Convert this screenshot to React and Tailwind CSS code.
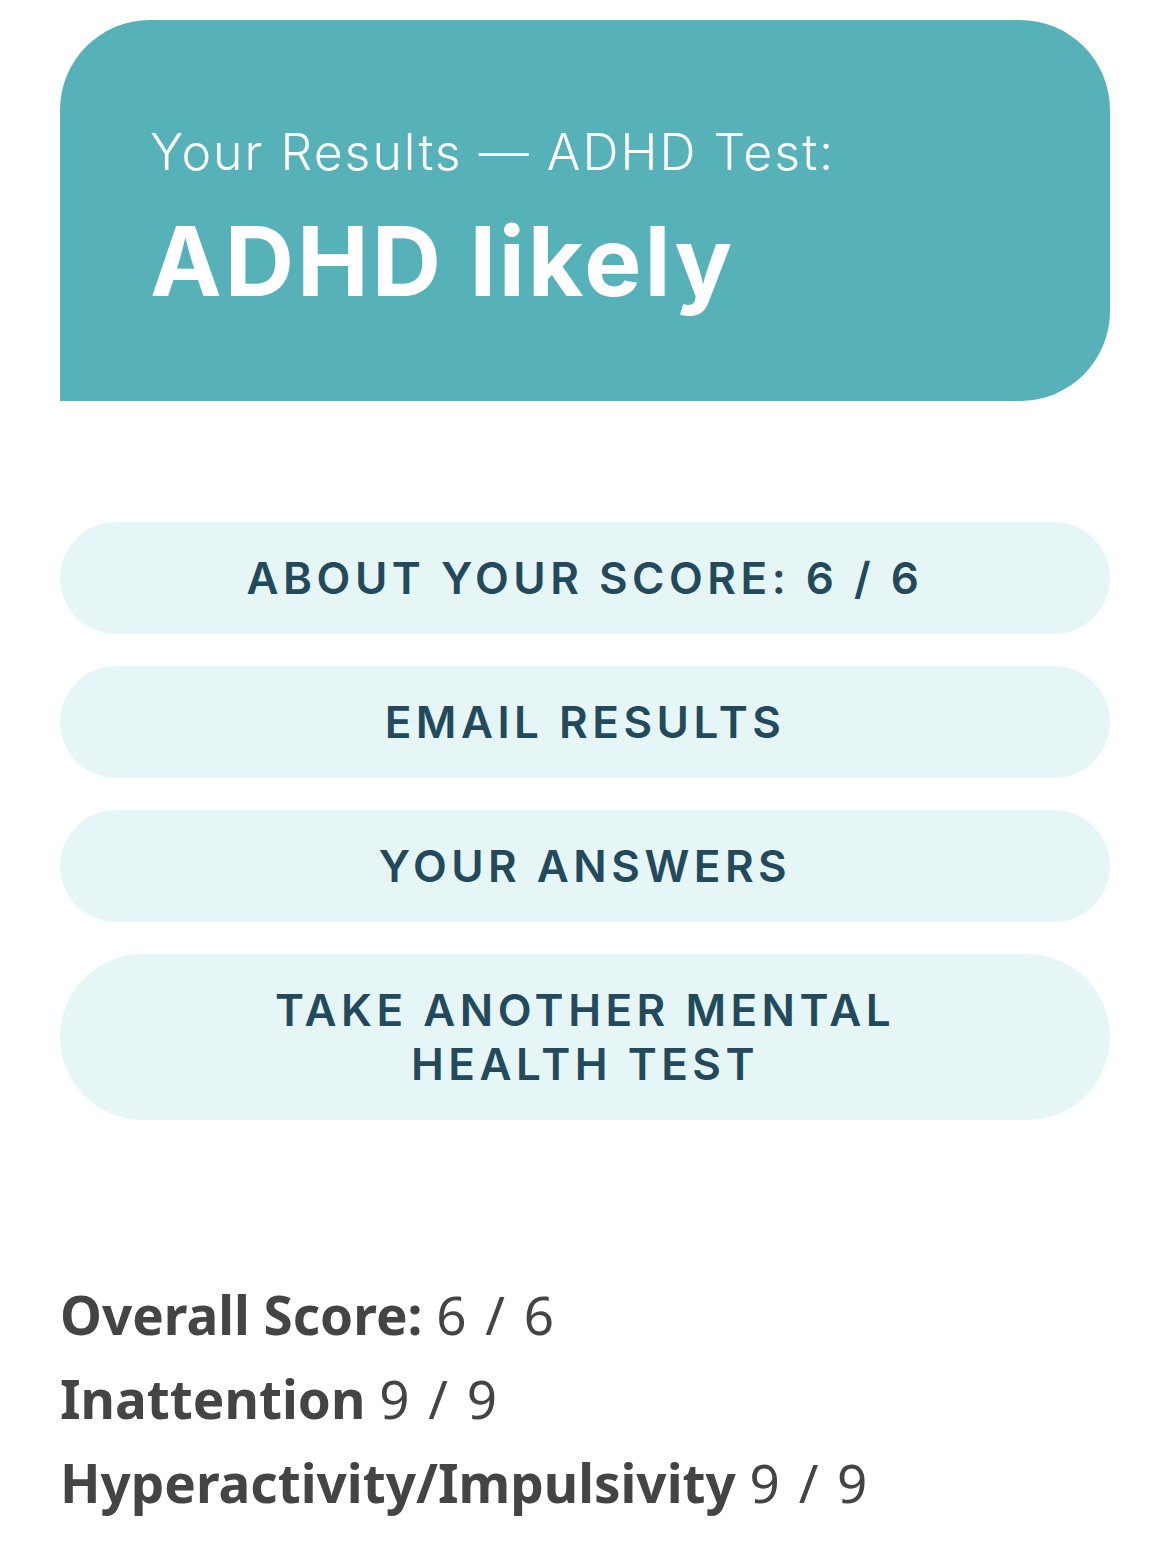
import React from 'react';

const buttons = [
  ['ABOUT YOUR SCORE: 6 / 6'],
  ['EMAIL RESULTS'],
  ['YOUR ANSWERS'],
  ['TAKE ANOTHER MENTAL', 'HEALTH TEST'],
];

const scores = [
  { label: 'Overall Score:', value: '6 / 6' },
  { label: 'Inattention', value: '9 / 9' },
  { label: 'Hyperactivity/Impulsivity', value: '9 / 9' },
];

export default function App() {
  return (
    <div className="min-h-[1543px] bg-white px-[60px] pt-[20px]">
      <header className="h-[381px] rounded-tl-[90px] rounded-tr-[90px] rounded-br-[90px] bg-[#56b1b8] pl-[90px] pt-[100px] text-white [font-family:Inter,sans-serif]">
        <p className="text-[50px] font-light leading-[64px] tracking-[2px]">Your Results — ADHD Test:</p>
        <h1 className="mt-[22px] text-[96px] font-bold leading-[110px] tracking-[3px]">ADHD likely</h1>
      </header>

      <div className="mt-[121px] flex flex-col gap-[32px]">
        {buttons.map((lines) => (
          <button
            key={lines[0]}
            className="flex flex-col items-center justify-center rounded-full bg-[#e6f6f6] py-[29px] text-[44px] font-semibold leading-[54px] tracking-[4.5px] text-[#234a5c] [font-family:Inter,sans-serif]"
          >
            {lines.map((l) => (
              <span key={l}>{l}</span>
            ))}
          </button>
        ))}
      </div>

      <div className="mt-[153px] text-[53px] leading-[84px] text-[#444444] [font-family:'Noto_Sans',sans-serif]">
        {scores.map((s) => (
          <p key={s.label}>
            <span className="font-bold">{s.label}</span> <span className="tracking-[2.5px]">{s.value}</span>
          </p>
        ))}
      </div>
    </div>
  );
}
